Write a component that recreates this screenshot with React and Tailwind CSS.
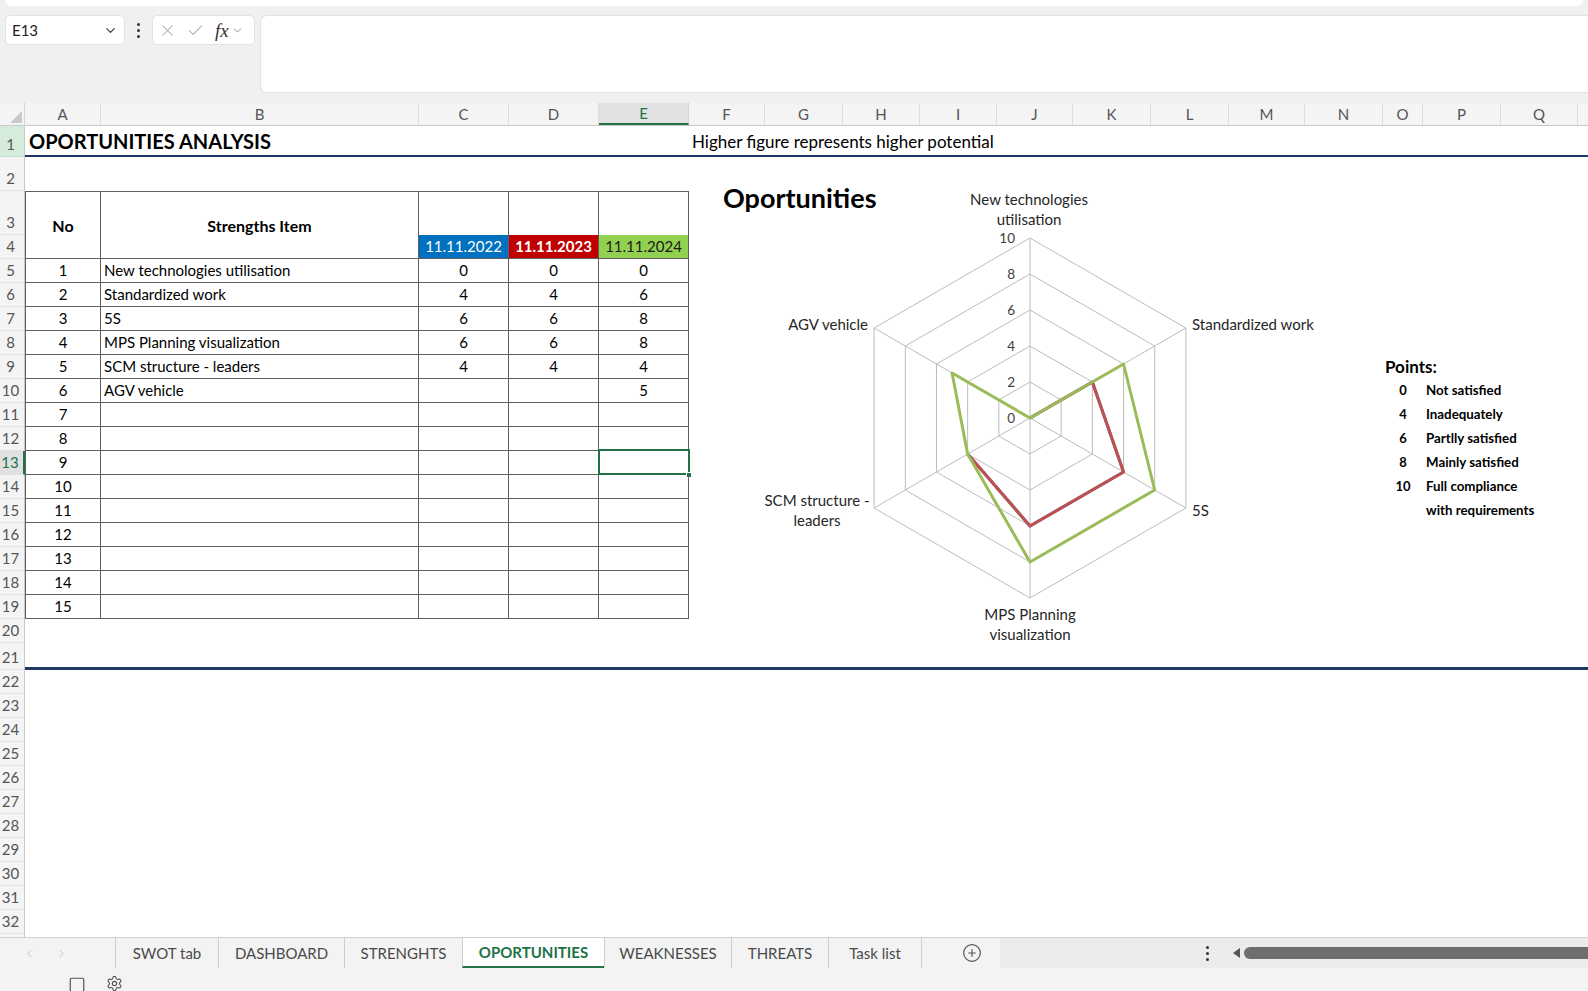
import React from 'react';
import { ChevronDown, X, Check, CirclePlus, ChevronLeft, ChevronRight, Settings, Square } from 'lucide-react';

const COLS = [
  ['A', 'w-[76px]'], ['B', 'w-[318px]'], ['C', 'w-[90px]'], ['D', 'w-[90px]'], ['E', 'w-[90px]'],
  ['F', 'w-[76px]'], ['G', 'w-[78px]'], ['H', 'w-[77px]'], ['I', 'w-[77px]'], ['J', 'w-[76px]'],
  ['K', 'w-[78px]'], ['L', 'w-[78px]'], ['M', 'w-[76px]'], ['N', 'w-[78px]'], ['O', 'w-[40px]'],
  ['P', 'w-[78px]'], ['Q', 'w-[77px]'],
];

const ROWHEADS = (() => {
  const r = [[1, 'h-[31px]'], [2, 'h-[34px]'], [3, 'h-[44px]'], [4, 'h-[24px]']];
  for (let i = 5; i <= 20; i++) r.push([i, 'h-[24px]']);
  r.push([21, 'h-[27px]']);
  for (let i = 22; i <= 32; i++) r.push([i, 'h-[24px]']);
  return r;
})();

const ITEMS = [
  ['New technologies utilisation', '0', '0', '0'],
  ['Standardized work', '4', '4', '6'],
  ['5S', '6', '6', '8'],
  ['MPS Planning visualization', '6', '6', '8'],
  ['SCM structure - leaders', '4', '4', '4'],
  ['AGV vehicle', '', '', '5'],
];

const LEGEND = {
  10: ['0', 'Not satisfied'],
  11: ['4', 'Inadequately'],
  12: ['6', 'Partlly satisfied'],
  13: ['8', 'Mainly satisfied'],
  14: ['10', 'Full compliance'],
  15: ['', 'with requirements'],
};

const BD = 'border-[#5f5f5f]';

function Radar() {
  const cx = 1030, cy = 418, u = 18;
  const pt = (v, i) => {
    const a = (i * Math.PI) / 3;
    return [cx + u * v * Math.sin(a), cy - u * v * Math.cos(a)];
  };
  const ring = (v) => [0, 1, 2, 3, 4, 5].map((i) => pt(v, i).join(',')).join(' ');
  const green = [0, 6, 8, 8, 4, 5];
  const red = [0, 4, 6, 6, 4];
  const open = (arr) => arr.map((v, i) => pt(v, i).join(',')).join(' ');
  return (
    <svg
      className="absolute left-[675px] top-[44px] w-[660px] h-[490px] pointer-events-none"
      viewBox="700 170 660 490"
      fontFamily="Lato, 'Liberation Sans', sans-serif"
    >
      <text x="723" y="208" fontSize="27" fontWeight="700" fill="#000">Oportunities</text>
      {[2, 4, 6, 8, 10].map((v) => (
        <polygon key={v} points={ring(v)} fill="none" stroke="#bcbcbc" strokeWidth="1" />
      ))}
      {[0, 1, 2, 3, 4, 5].map((i) => {
        const [x, y] = pt(10, i);
        return <line key={i} x1={cx} y1={cy} x2={x} y2={y} stroke="#bcbcbc" strokeWidth="1" />;
      })}
      {[0, 2, 4, 6, 8, 10].map((v) => (
        <text key={v} x="1015" y={cy - u * v + 5} fontSize="13.5" fill="#404040" textAnchor="end">{v}</text>
      ))}
      <polyline points={open(red)} fill="none" stroke="#4f81bd" strokeWidth="3" strokeLinejoin="round" />
      <polyline points={open(red)} fill="none" stroke="#c0504d" strokeWidth="3" strokeLinejoin="round" />
      <polygon points={open(green)} fill="none" stroke="#9bbb59" strokeWidth="3" strokeLinejoin="round" />
      <g fontSize="15" fill="#262626">
        <text x="1029" y="205" textAnchor="middle">New technologies</text>
        <text x="1029" y="225" textAnchor="middle">utilisation</text>
        <text x="1192" y="330">Standardized work</text>
        <text x="1192" y="516">5S</text>
        <text x="1030" y="620" textAnchor="middle">MPS Planning</text>
        <text x="1030" y="640" textAnchor="middle">visualization</text>
        <text x="817" y="506" textAnchor="middle">SCM structure -</text>
        <text x="817" y="526" textAnchor="middle">leaders</text>
        <text x="868" y="330" textAnchor="end">AGV vehicle</text>
      </g>
    </svg>
  );
}

function Toolbar() {
  return (
    <div className="h-[103px] flex flex-col shrink-0">
      <div className="h-[6px] mx-[5px] bg-white rounded-b-[7px]" />
      <div className="flex items-start pl-[5px] pt-[9px]">
        <div className="w-[120px] h-[30px] bg-white rounded-[5px] border border-[#e3e3e3] flex items-center justify-between pl-[6px] pr-[6px] text-[15px] text-[#222]">
          <span>E13</span>
          <ChevronDown size={15} strokeWidth={1.8} className="text-[#333]" />
        </div>
        <div className="w-[27px] h-[30px] flex items-center justify-center">
          <div className="flex flex-col gap-[3px]">
            <div className="w-[3px] h-[3px] rounded-full bg-[#333]" />
            <div className="w-[3px] h-[3px] rounded-full bg-[#333]" />
            <div className="w-[3px] h-[3px] rounded-full bg-[#333]" />
          </div>
        </div>
        <div className="w-[103px] h-[30px] bg-white rounded-[5px] border border-[#e3e3e3] flex items-center pl-[5px]">
          <X size={19} strokeWidth={1.3} className="text-[#a8a8a8]" />
          <Check size={19} strokeWidth={1.3} className="text-[#a8a8a8] ml-[9px]" />
          <span className="ml-[10px] text-[19px] italic text-[#333] font-['Liberation_Serif',serif] leading-none">fx</span>
          <ChevronDown size={13} strokeWidth={1.5} className="text-[#777] ml-[2px]" />
        </div>
        <div className="ml-[5px] flex-1 h-[78px] bg-white rounded-l-[7px] border border-r-0 border-[#e3e3e3]" />
      </div>
    </div>
  );
}

function ColumnHeader() {
  return (
    <div className="h-[23px] flex shrink-0 bg-[#f4f4f4] border-b border-[#c8c8c8] text-[15px] text-[#555]">
      <div className="w-[25px] h-full border-r border-[#d4d4d4] relative">
        <svg className="absolute right-[2px] bottom-[2px]" width="12" height="12" viewBox="0 0 12 12">
          <polygon points="12,0 12,12 0,12" fill="#c9c9c9" />
        </svg>
      </div>
      {COLS.map(([l, w]) =>
        l === 'E' ? (
          <div key={l} className={`${w} h-full flex items-center justify-center bg-[#e2e2e2] border-r border-[#d4d4d4] border-b-2 border-b-[#217346] text-[#217346]`}>{l}</div>
        ) : (
          <div key={l} className={`${w} h-full flex items-center justify-center border-r border-[#dcdcdc]`}>{l}</div>
        )
      )}
      <div className="flex-1" />
    </div>
  );
}

function RowHeaders() {
  return (
    <div className="w-[25px] shrink-0 bg-[#f4f4f4] border-r border-[#c8c8c8] flex flex-col text-[15px] text-[#555]">
      {ROWHEADS.map(([n, h]) => {
        let cls = 'border-b border-[#e2e2e2]';
        if (n === 1) cls = 'bg-[#d5ebdc] border-b border-[#c4dccb]';
        if (n === 13) cls = 'bg-[#e0e0e0] text-[#217346] border-b border-[#e2e2e2] border-r-2 border-r-[#217346] -mr-[1px]';
        return (
          <div key={n} className={`${h} ${cls} flex items-end justify-center pr-[3px] leading-[23px] shrink-0`}>{n}</div>
        );
      })}
      <div className="flex-1" />
    </div>
  );
}

function Sheet() {
  const rows = [];
  for (let r = 5; r <= 19; r++) {
    const it = ITEMS[r - 5] || ['', '', '', ''];
    const lg = LEGEND[r];
    rows.push(
      <div key={r} className="h-[24px] flex text-[15px] text-black">
        <div className={`w-[76px] h-full border-l border-r border-b ${BD} flex items-center justify-center`}>{r - 4}</div>
        <div className={`w-[318px] h-full border-r border-b ${BD} flex items-center pl-[3px]`}>{it[0]}</div>
        <div className={`w-[90px] h-full border-r border-b ${BD} flex items-center justify-center`}>{it[1]}</div>
        <div className={`w-[90px] h-full border-r border-b ${BD} flex items-center justify-center`}>{it[2]}</div>
        <div className={`w-[90px] h-full border-r border-b ${BD} flex items-center justify-center relative`}>
          {it[3]}
          {r === 13 && (
            <>
              <div className="absolute -left-[1px] -top-[2px] -right-[2px] -bottom-[1px] border-2 border-[#217346]" />
              <div className="absolute -right-[4px] -bottom-[4px] w-[6px] h-[6px] bg-[#217346] border border-white" />
            </>
          )}
        </div>
        <div className="w-[694px] h-full" />
        {r === 9 ? (
          <div className="w-[40px] h-full flex items-center pl-[2px] whitespace-nowrap text-[17px] font-bold">Points:</div>
        ) : (
          <div className="w-[40px] h-full flex items-center justify-center text-[13px] font-bold">{lg ? lg[0] : ''}</div>
        )}
        <div className="w-[78px] h-full flex items-center pl-[3px] whitespace-nowrap text-[13.3px] font-bold">{lg ? lg[1] : ''}</div>
      </div>
    );
  }

  return (
    <div className="flex-1 relative bg-white flex flex-col">
      <div className="h-[31px] shrink-0 flex items-end border-b-2 border-[#1f3864]">
        <div className="w-[664px] pl-[4px] text-[20px] font-bold leading-[27px] whitespace-nowrap">OPORTUNITIES ANALYSIS</div>
        <div className="pl-[3px] text-[17px] leading-[27px] whitespace-nowrap">Higher figure represents higher potential</div>
      </div>
      <div className="h-[34px] shrink-0" />
      <div className="h-[68px] shrink-0 flex text-[15px] text-black">
        <div className={`w-[76px] h-full border border-t ${BD} flex items-center justify-center font-bold text-[16px] pt-[1px]`}>No</div>
        <div className={`w-[318px] h-full border-t border-r border-b ${BD} flex items-center justify-center font-bold text-[16px] pt-[1px]`}>Strengths Item</div>
        <div className="w-[90px] h-full flex flex-col">
          <div className={`h-[44px] border-t border-r ${BD}`} />
          <div className={`h-[24px] border-r border-b ${BD} bg-[#0070c0] text-white flex items-center justify-center`}>11.11.2022</div>
        </div>
        <div className="w-[90px] h-full flex flex-col">
          <div className={`h-[44px] border-t border-r ${BD}`} />
          <div className={`h-[24px] border-r border-b ${BD} bg-[#c00000] text-white font-bold flex items-center justify-center`}>11.11.2023</div>
        </div>
        <div className="w-[90px] h-full flex flex-col">
          <div className={`h-[44px] border-t border-r ${BD}`} />
          <div className={`h-[24px] border-r border-b ${BD} bg-[#92d050] text-[#1a1a1a] flex items-center justify-center`}>11.11.2024</div>
        </div>
      </div>
      {rows}
      <div className="h-[24px] shrink-0" />
      <div className="h-[27px] shrink-0 border-b-[3px] border-[#1f3864]" />
      <div className="flex-1" />
      <Radar />
    </div>
  );
}

const TABS = [
  ['SWOT tab', 'w-[103px]'],
  ['DASHBOARD', 'w-[126px]'],
  ['STRENGHTS', 'w-[118px]'],
  ['OPORTUNITIES', 'w-[142px]'],
  ['WEAKNESSES', 'w-[127px]'],
  ['THREATS', 'w-[97px]'],
  ['Task list', 'w-[94px]'],
];

function TabBar() {
  return (
    <div className="h-[31px] shrink-0 flex border-t border-[#cfcfcf] bg-[#f3f3f3] text-[15px] text-[#4a4a4a]">
      <div className="w-[115px] h-full flex items-center">
        <ChevronLeft size={13} strokeWidth={1.5} className="text-[#b5b5b5] ml-[23px]" />
        <ChevronRight size={13} strokeWidth={1.5} className="text-[#b5b5b5] ml-[19px]" />
      </div>
      {TABS.map(([t, w], i) =>
        t === 'OPORTUNITIES' ? (
          <div key={t} className={`${w} h-full flex items-center justify-center bg-white border-b-2 border-[#217346] text-[#217346] font-bold border-l border-l-[#cfcfcf]`}>{t}</div>
        ) : (
          <div key={t} className={`${w} h-full flex items-center justify-center border-l border-[#cfcfcf] ${i === TABS.length - 1 ? 'border-r' : ''}`}>{t}</div>
        )
      )}
      <div className="w-[78px] h-full flex items-center">
        <CirclePlus size={20} strokeWidth={1.4} className="text-[#555] ml-[40px]" />
      </div>
      <div className="flex-1 h-full bg-[#ebebeb] flex items-center">
        <div className="ml-[206px] flex flex-col gap-[3px]">
          <div className="w-[3px] h-[3px] rounded-full bg-[#333]" />
          <div className="w-[3px] h-[3px] rounded-full bg-[#333]" />
          <div className="w-[3px] h-[3px] rounded-full bg-[#333]" />
        </div>
        <svg className="ml-[23px]" width="8" height="10" viewBox="0 0 8 10">
          <polygon points="8,0 8,10 1,5" fill="#555" />
        </svg>
        <div className="ml-[4px] flex-1 h-[12px] rounded-l-full bg-[#6e6e6e]" />
      </div>
    </div>
  );
}

function StatusBar() {
  return (
    <div className="h-[23px] shrink-0 bg-[#f3f3f3] flex items-start overflow-hidden">
      <Square size={18} strokeWidth={1.6} className="text-[#555] ml-[68px] mt-[8px]" />
      <Settings size={17} strokeWidth={1.6} className="text-[#555] ml-[20px] mt-[7px]" />
    </div>
  );
}

export default function App() {
  return (
    <div className="w-[1588px] h-[991px] overflow-hidden flex flex-col bg-[#eef0f2] font-['Lato','Liberation_Sans',sans-serif]">
      <Toolbar />
      <ColumnHeader />
      <div className="h-[811px] shrink-0 flex bg-white">
        <RowHeaders />
        <Sheet />
      </div>
      <TabBar />
      <StatusBar />
    </div>
  );
}
